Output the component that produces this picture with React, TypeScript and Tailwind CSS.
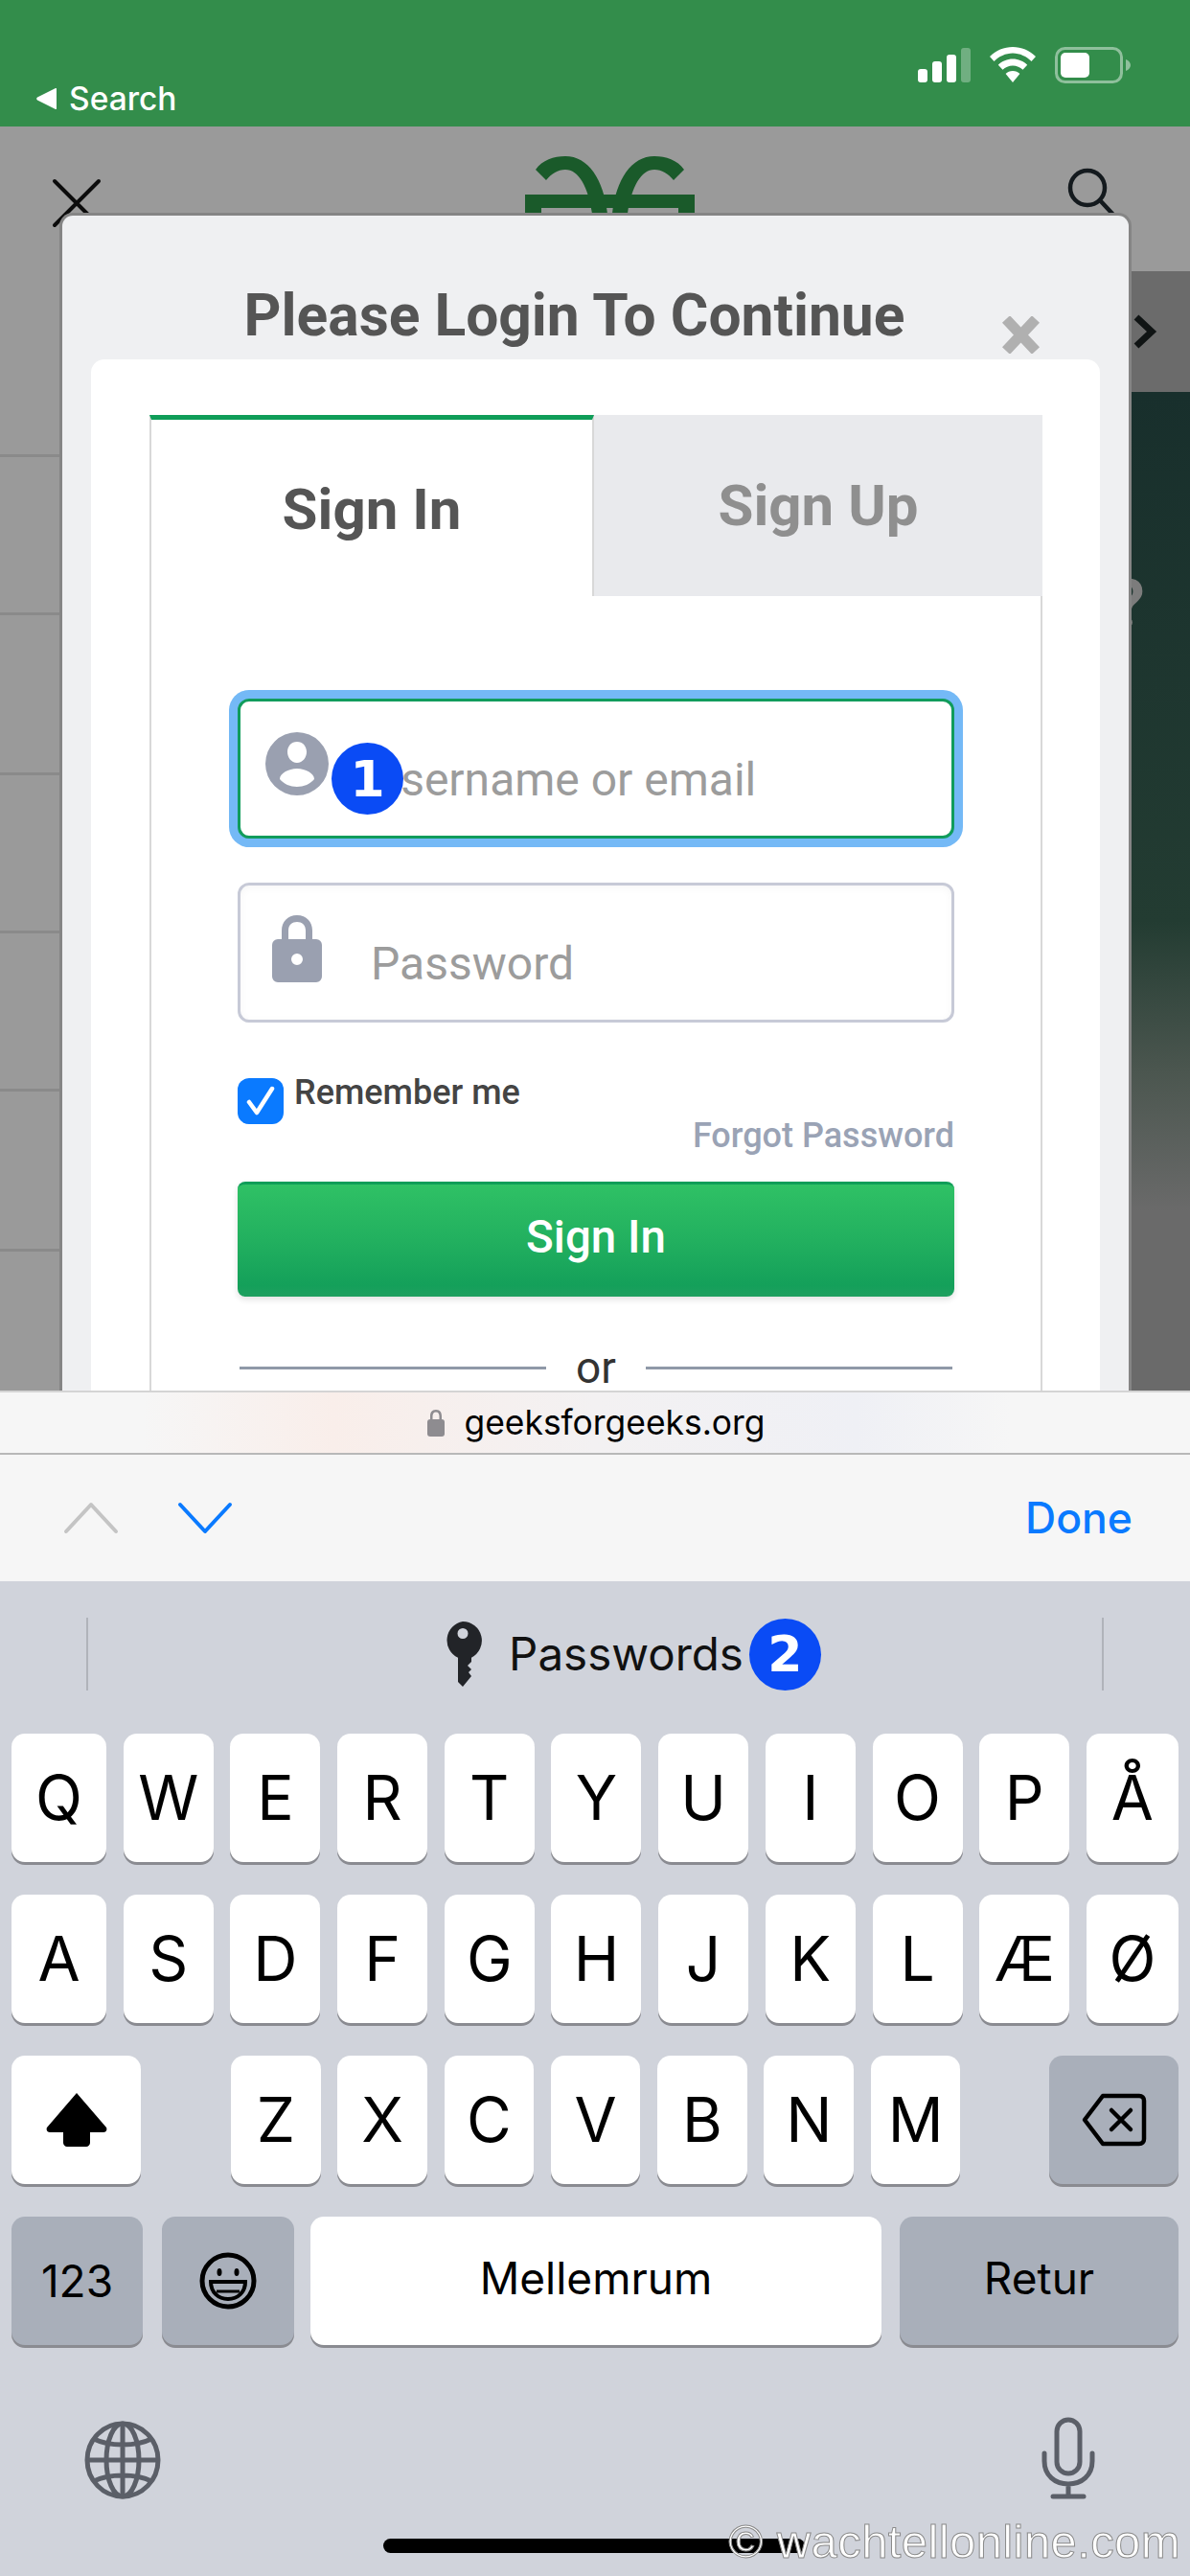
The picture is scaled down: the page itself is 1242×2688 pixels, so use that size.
import React from "react";

const ROW_1 = ["Q", "W", "E", "R", "T", "Y", "U", "I", "O", "P", "Å"];
const ROW_2 = ["A", "S", "D", "F", "G", "H", "J", "K", "L", "Æ", "Ø"];
const ROW_3 = ["Z", "X", "C", "V", "B", "N", "M"];
const LEFT_ROWS = ["h-[194px]", "h-[165px]", "h-[167px]", "h-[165px]", "h-[165px]", "h-[167px]"];

function Key({ label, className = "" }: { label: React.ReactNode; className?: string }) {
  return (
    <div className={`h-[134px] rounded-[14px] bg-white shadow-[0_3px_0_#8a8b91] flex items-center justify-center text-[64px] text-black ${className}`}>
      {label}
    </div>
  );
}

function GrayKey({ children, className = "" }: { children: React.ReactNode; className?: string }) {
  return (
    <div className={`h-[134px] rounded-[14px] bg-[#a9afba] shadow-[0_3px_0_#8a8b91] flex items-center justify-center text-black ${className}`}>
      {children}
    </div>
  );
}

function Badge({ n, className = "" }: { n: string; className?: string }) {
  return (
    <div className={`w-[75px] h-[75px] rounded-full bg-[#0a4bf5] text-white flex items-center justify-center text-[52px] font-bold font-['DejaVu_Sans',sans-serif] ${className}`}>
      {n}
    </div>
  );
}

function StatusBar() {
  return (
    <div className="h-[132px] bg-[#338d4b] flex justify-between text-white">
      <div className="pl-[38px] pt-[82px] flex items-center gap-[13px] h-[124px] text-[33.500px] font-medium">
        <svg width="21" height="22" viewBox="0 0 21 22" fill="white"><path d="M21 1v20a1 1 0 0 1-1.500.800L1 12.500a2 2 0 0 1 0-3L19.500.200A1 1 0 0 1 21 1z" /></svg>
        <span>Search</span>
      </div>
      <div className="pr-[62px] pt-[49px] flex items-start gap-[20px]">
        <svg width="55" height="37" viewBox="0 0 55 37" fill="white">
          <rect x="0" y="23" width="10" height="14" rx="3" />
          <rect x="15" y="15" width="10" height="22" rx="3" />
          <rect x="30" y="8" width="10" height="29" rx="3" />
          <rect x="45" y="1" width="10" height="36" rx="3" opacity="0.3" />
        </svg>
        <svg width="48" height="37" viewBox="0 0 48 37" fill="white">
          <path d="M24 0C15 0 6.500 3.500 0 10l4.500 5C9.500 10 16.500 6.500 24 6.500S38.500 10 43.500 15L48 10C41.500 3.500 33 0 24 0z" />
          <path d="M24 12.500c-5.800 0-11.200 2.300-15.200 6.200l4.700 5.100c2.700-2.700 6.500-4.400 10.500-4.400s7.800 1.700 10.500 4.400l4.700-5.100c-4-3.900-9.400-6.200-15.200-6.200z" />
          <path d="M24 25c-2.900 0-5.500 1.100-7.400 2.900L24 37l7.400-9.100C29.500 26.100 26.900 25 24 25z" />
        </svg>
        <svg width="79" height="38" viewBox="0 0 79 38">
          <rect x="1.500" y="1.500" width="68" height="35" rx="9" fill="none" stroke="white" strokeOpacity="0.45" strokeWidth="3" />
          <rect x="6" y="6" width="30" height="26" rx="5" fill="white" />
          <path d="M74 13c3 1 5 3.500 5 6s-2 5-5 6z" fill="white" fillOpacity="0.45" />
        </svg>
      </div>
    </div>
  );
}

function Backdrop() {
  return (
    <div className="h-full flex flex-col">
      <div className="h-[151px] px-[54px] bg-[#9a9a9a] flex items-start justify-between">
        <svg className="mt-[54px]" width="52" height="52" viewBox="0 0 52 52" fill="none" stroke="#0c0c0c" strokeWidth="4" strokeLinecap="round"><path d="M3 3l46 46M49 3L3 49" /></svg>
        <svg className="ml-[53px] mt-[31px]" width="177" height="60" viewBox="0 0 177 60" fill="#1a5a2a">
          <path d="M11 14C18 4 30 0 42 0c24 0 40 24 44 60H70C66 32 56 14 42 14c-8 0-14 4-20 11z" />
          <path d="M166 14C159 4 147 0 135 0c-24 0-40 24-44 60h16c4-28 14-46 28-46 8 0 14 4 20 11z" />
          <rect x="0" y="40" width="177" height="14" />
          <rect x="0" y="54" width="17" height="6" />
          <rect x="160" y="54" width="17" height="6" />
        </svg>
        <svg className="mt-[43px] mr-[24px]" width="50" height="50" viewBox="0 0 50 50" fill="none" stroke="#141a1e" strokeWidth="4.500" strokeLinecap="round"><circle cx="21" cy="21" r="18" /><path d="M34 34l13 14" /></svg>
      </div>
      <div className="flex-1 flex">
        <div className="flex-1 bg-[#9a9a9a]">
          {LEFT_ROWS.map((h, i) => (
            <div key={i} className={`${h} border-b-[3px] border-[#8a8a8a]`} />
          ))}
        </div>
        <div className="w-[62px] flex flex-col">
          <div className="h-[126px] bg-[#6b6b6b] flex items-center pl-[2px]">
            <svg width="26" height="36" viewBox="0 0 26 36" fill="none" stroke="#101414" strokeWidth="7"><path d="M4 3l16 15L4 33" /></svg>
          </div>
          <div className="flex-1 pt-[186px] bg-[linear-gradient(180deg,#182f2c_0%,#233c32_53%,#4b564f_68%,#6a6a6a_82%,#6a6a6a_100%)] text-[#7c7c7c] text-[70px] font-bold leading-[70px] font-['Roboto',sans-serif] -indent-[20px]">
            ?
          </div>
        </div>
      </div>
    </div>
  );
}

function LoginModal() {
  return (
    <div className="absolute left-[62px] top-[90px] w-[1119px] bottom-0 rounded-t-[14px] border-[3px] border-b-0 border-[#858585] bg-[#eff0f2] font-['Roboto',sans-serif]">
      <div className="h-[150px] pr-[44px] pt-[60px] flex items-center justify-center text-[#555555] text-[60.500px] font-bold">
        Please Login To Continue
      </div>
      <svg className="absolute left-[981px] top-[105px]" width="39" height="39" viewBox="0 0 39 39" stroke="#b0b0b0" strokeWidth="11"><path d="M4 3l31 33M35 3L4 36" /></svg>
      <div className="mx-[30px] h-[1076px] rounded-t-[14px] bg-white pl-[61px] pr-[60px] pt-[58px]">
        <div className="flex h-[189px]">
          <div className="w-[464px] border-t-[5px] border-x-2 border-t-[#0f9d58] border-x-[#d8d8d8] flex items-center justify-center text-[#555555] text-[60px] font-bold pt-[4px]">
            Sign In
          </div>
          <div className="flex-1 bg-[#e9eaed] flex items-center justify-center text-[#8f8f8f] text-[60px] font-bold">
            Sign Up
          </div>
        </div>
        <div className="border-x-2 border-[#d8d8d8] pt-[107px] px-[90px] h-[900px]">
          <div className="relative h-[146px] rounded-[12px] border-[3px] border-[#119c5c] shadow-[0_0_0_9px_#74b9f6] bg-white flex items-center">
            <svg className="ml-[26px] mb-[10px]" width="66" height="66" viewBox="0 0 66 66" fill="#9aa0b0">
              <path fillRule="evenodd" d="M33 0a33 33 0 1 0 0 66 33 33 0 0 0 0-66zm0 10c6 0 10 4.800 10 10.500S39 32 33 32s-10-5.800-10-11.500S27 10 33 10zM15 49c0-6 9-11 18-11s18 5 18 11c-4 5-11 8-18 8s-14-3-18-8z" />
            </svg>
            <span className="ml-[44px] mt-[24px] text-[48px] text-[#9c9c9c]">Username or email</span>
            <Badge n="1" className="absolute left-[95px] top-[43px]" />
          </div>
          <div className="mt-[46px] h-[146px] rounded-[12px] border-[3px] border-[#c7cad7] bg-white shadow-[inset_0_2px_8px_rgba(0,0,0,0.04)] flex items-center">
            <svg className="ml-[33px] mb-[8px]" width="52" height="70" viewBox="0 0 52 70" fill="#9aa0b0">
              <path d="M26 0C16 0 10 7 10 16v11h7V16c0-6 4-9 9-9s9 3 9 9v11h7V16C42 7 36 0 26 0z" />
              <path fillRule="evenodd" d="M6 25h40a6 6 0 0 1 6 6v33a6 6 0 0 1-6 6H6a6 6 0 0 1-6-6V31a6 6 0 0 1 6-6zm20 15a6 6 0 1 0 0 12 6 6 0 0 0 0-12z" />
            </svg>
            <span className="ml-[51px] mt-[24px] text-[48px] text-[#9c9c9c]">Password</span>
          </div>
          <div className="mt-[58px] h-[48px] flex items-start">
            <div className="w-[48px] h-[48px] rounded-[12px] bg-[#0a7aff] flex items-center justify-center">
              <svg width="34" height="32" viewBox="0 0 34 32" fill="none" stroke="white" strokeWidth="4.500" strokeLinecap="round" strokeLinejoin="round"><path d="M5 17l8 11L29 3" /></svg>
            </div>
            <span className="ml-[11px] text-[36px] leading-[30px] font-medium text-[#444444]">Remember me</span>
          </div>
          <div className="-mt-[10px] text-right text-[36px] leading-[44px] font-medium text-[#9aa3b5]">Forgot Password</div>
          <div className="mt-[26px] h-[120px] rounded-[8px] border-t-[3px] border-[#0f9d58] bg-[linear-gradient(180deg,#2fc165_0%,#22b05f_50%,#14a05a_90%,#1f9f5f_100%)] shadow-[0_3px_6px_rgba(0,0,0,0.12)] flex items-center justify-center text-white text-[47.500px] font-medium pb-[6px]">
            Sign In
          </div>
          <div className="mt-[54px] flex items-center gap-[31px] text-[46px] leading-[40px] text-[#333333] px-[2px]">
            <div className="flex-1 h-[3px] bg-[#8f99a8]" />
            or
            <div className="flex-1 h-[3px] bg-[#8f99a8]" />
          </div>
        </div>
      </div>
    </div>
  );
}

function Toolbars() {
  return (
    <>
      <div className="h-[67px] border-t-2 border-b-2 border-t-[#d4d4d4] border-b-[#b8b8b8] bg-[linear-gradient(90deg,#f6f6f6_12%,#f9eeea_28%,#f3f1f2_50%,#eff0f5_72%,#f6f6f6_85%)] flex items-center justify-center gap-[20px] text-[35.400px] text-black pl-[3px]">
        <svg width="18" height="28" viewBox="0 0 18 28" fill="#8e8c90"><path d="M9 0C4.500 0 3 3 3 7v4h2.500V7c0-2.500 1-4.500 3.500-4.500S12.500 4.500 12.500 7v4H15V7c0-4-1.500-7-6-7z" /><rect x="0" y="10" width="18" height="18" rx="3" /></svg>
        <span>geeksforgeeks.org</span>
      </div>
      <div className="h-[132px] bg-[#f6f6f6] flex items-center pl-[66px] pr-[60px]">
        <svg width="58" height="34" viewBox="0 0 58 34" fill="none" stroke="#c4c4c4" strokeWidth="4" strokeLinecap="round" strokeLinejoin="round"><path d="M3 31L29 3l26 28" /></svg>
        <svg className="ml-[61px]" width="58" height="34" viewBox="0 0 58 34" fill="none" stroke="#0a7aff" strokeWidth="4" strokeLinecap="round" strokeLinejoin="round"><path d="M3 3l26 28L55 3" /></svg>
        <span className="ml-auto text-[44.500px] font-medium text-[#0a7aff]">Done</span>
      </div>
    </>
  );
}

function Keyboard() {
  return (
    <div className="relative h-[1038px] bg-[#d0d3db] font-['Inter',sans-serif]">
      <div className="h-[159px] px-[90px] pt-[38px] flex items-start justify-between">
        <div className="w-[2px] h-[76px] bg-[#b0b3ba]" />
        <div className="relative flex items-center h-[76px] ml-[78px]">
          <svg width="40" height="68" viewBox="0 0 40 68" fill="#222428">
            <path fillRule="evenodd" d="M20 0a20 20 0 0 1 9 37.800V42l-4 4 4 4-3 3 3 4-9 11-5-5V37.800A20 20 0 0 1 20 0zm0 7a5.500 5.500 0 1 0 0 11 5.500 5.500 0 0 0 0-11z" />
          </svg>
          <span className="ml-[28px] text-[47.500px] text-[#111111]">Passwords</span>
          <Badge n="2" className="ml-[6px]" />
        </div>
        <div className="w-[2px] h-[76px] bg-[#b0b3ba]" />
      </div>
      <div className="px-[12px] flex flex-col gap-[34px]">
        <div className="grid grid-cols-[99px_repeat(9,94px)_96px] gap-x-[17.700px]">
          {ROW_1.map((k) => <Key key={k} label={k} />)}
        </div>
        <div className="grid grid-cols-[99px_repeat(9,94px)_96px] gap-x-[17.700px]">
          {ROW_2.map((k) => <Key key={k} label={k} />)}
        </div>
        <div className="flex">
          <div className="w-[135px] h-[134px] rounded-[14px] bg-white shadow-[0_3px_0_#8a8b91] flex items-center justify-center">
            <svg width="64" height="56" viewBox="0 0 64 56" fill="black"><path d="M32 0L63 36c1 2 0 5-3 5H46v11c0 2-2 4-4 4H22c-2 0-4-2-4-4V41H4c-3 0-4-3-3-5z" /></svg>
          </div>
          <div className="ml-[94px] flex gap-[17.800px]">
            {ROW_3.map((k) => <Key key={k} label={k} className="w-[93.500px]" />)}
          </div>
          <GrayKey className="ml-auto w-[135px]">
            <svg width="68" height="56" viewBox="0 0 68 56" fill="none" stroke="black" strokeWidth="4.500" strokeLinejoin="round" strokeLinecap="round">
              <path d="M22 3h38c3 0 5 2 5 5v40c0 3-2 5-5 5H22L3 28z" />
              <path d="M31 18l20 20M51 18L31 38" />
            </svg>
          </GrayKey>
        </div>
        <div className="flex">
          <GrayKey className="w-[137px] text-[46px]">123</GrayKey>
          <GrayKey className="ml-[20px] w-[138px]">
            <svg width="60" height="60" viewBox="0 0 60 60" fill="none" stroke="black" strokeWidth="5">
              <circle cx="30" cy="30" r="27" />
              <ellipse cx="21" cy="21" rx="2.500" ry="4" fill="black" stroke="none" />
              <ellipse cx="39" cy="21" rx="2.500" ry="4" fill="black" stroke="none" />
              <path d="M12 31h36c0 11-8 18-18 18s-18-7-18-18z" strokeWidth="4" />
              <path d="M18 41h24" strokeWidth="3" />
            </svg>
          </GrayKey>
          <Key label="Mellemrum" className="ml-[17px] w-[596px] !text-[46px] pb-[6px]" />
          <GrayKey className="ml-[19px] flex-1 text-[46px] pb-[6px]">Retur</GrayKey>
        </div>
      </div>
      <div className="px-[88px] mt-[79px] flex items-start justify-between">
        <svg width="80" height="82" viewBox="0 0 80 82" fill="none" stroke="#5b5f68" strokeWidth="5">
          <ellipse cx="40" cy="41" rx="37" ry="38" />
          <ellipse cx="40" cy="41" rx="17" ry="38" />
          <path d="M40 3v76M3 41h74M10 19c16 8 44 8 60 0M10 63c16-8 44-8 60 0" />
        </svg>
        <svg className="mr-[11px] -mt-[4px]" width="56" height="86" viewBox="0 0 56 86" fill="none" stroke="#5b5f68" strokeWidth="5" strokeLinecap="round">
          <rect x="16" y="3" width="24" height="56" rx="12" />
          <path d="M3 38v8c0 15 11 24 25 24s25-9 25-24v-8M28 70v12" />
          <path d="M12 83h32" strokeWidth="5" />
        </svg>
      </div>
      <div className="absolute left-[400px] bottom-[24px] w-[440px] h-[15px] rounded-full bg-black" />
      <div className="absolute right-[10px] bottom-[6px] text-[49px] leading-[60px] text-white [-webkit-text-stroke:1px_#8a8a8a] font-['Liberation_Sans',sans-serif] tracking-[0.4px]">
        © wachtellonline.com
      </div>
    </div>
  );
}

export default function App() {
  return (
    <div className="w-[1242px] h-[2688px] overflow-hidden flex flex-col font-['Inter',sans-serif]">
      <StatusBar />
      <div className="relative h-[1319px] overflow-hidden">
        <Backdrop />
        <LoginModal />
      </div>
      <Toolbars />
      <Keyboard />
    </div>
  );
}
